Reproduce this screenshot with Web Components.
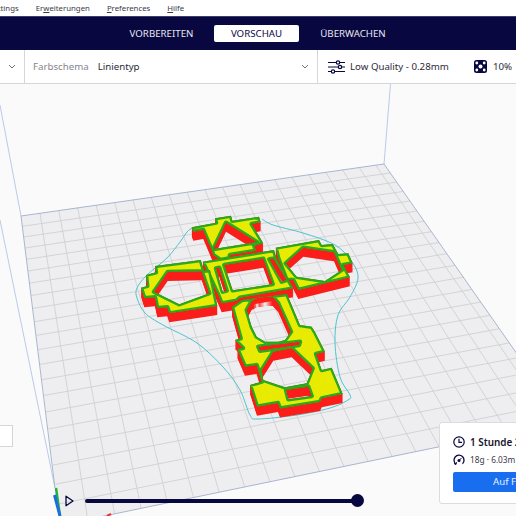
<!DOCTYPE html>
<html>
<head>
<meta charset="utf-8">
<title>Vorschau</title>
<style>
    html, body{ margin:0; height:100%; overflow:hidden; background:#fafafa; }
    body{ display:flex; flex-direction:column; font-family:"Noto Sans", "Open Sans", sans-serif; color:#1b1b2e; }
</style>
</head>
<body>
<app-menubar></app-menubar>
<stage-tabs></stage-tabs>
<view-toolbar></view-toolbar>
<build-view>
    <layer-slider></layer-slider>
    <print-panel></print-panel>
</build-view>

<script>
class AppMenubar extends HTMLElement{
    constructor(){
        super();
        this.attachShadow({mode:'open'}).innerHTML = `
        <style>
        :host{ display:flex; flex:none; height:16px; background:#fff; overflow:hidden; font-size:7.800px; line-height:16px; color:#3a3a48; white-space:nowrap; }
        span{ flex:none; }
        .settings{ margin-left:-11px; margin-right:17px; }
        .ext{ margin-right:17px; }
        .pref{ margin-right:17px; }
        u{ text-underline-offset:1px; }
        </style>
        <span class="settings">Settings</span>
        <span class="ext">Er<u>w</u>eiterungen</span>
        <span class="pref"><u>P</u>references</span>
        <span><u>H</u>ilfe</span>`;
    }
}
customElements.define('app-menubar', AppMenubar);

class StageTabs extends HTMLElement{
    constructor(){
        super();
        this.attachShadow({mode:'open'}).innerHTML = `
        <style>
        :host{ display:grid; flex:none; grid-template-columns:repeat(3,85px); gap:10px; justify-content:center; align-items:center; height:34px; padding-right:3px; background:#08073f; font-size:9.700px; color:#e8e8f2; text-align:center; box-sizing:border-box; border-top:1px solid #3c3c6c; }
        div{ height:17px; line-height:17px; border-radius:2px; }
        .active{ background:#fff; color:#08073f; }
        .last{ padding-left:3px; }
        </style>
        <div>VORBEREITEN</div>
        <div class="active">VORSCHAU</div>
        <div class="last">ÜBERWACHEN</div>`;
    }
}
customElements.define('stage-tabs', StageTabs);

class ViewToolbar extends HTMLElement{
    constructor(){
        super();
        const chevron = `<svg width="8" height="5" viewBox="0 0 8 5"><path d="M1 1l3 3 3-3" fill="none" stroke="#70707c" stroke-width="1"/></svg>`;
        this.attachShadow({mode:'open'}).innerHTML = `
        <style>
        :host{ display:flex; flex:none; height:34px; box-sizing:border-box; background:#fff; border-bottom:1px solid #d6d6d6; font-size:9.700px; color:#2b2b38; white-space:nowrap; overflow:hidden; }
        .cell{ display:flex; align-items:center; flex:none; border-right:1px solid #d6d6d6; box-sizing:border-box; }
        .first{ width:25px; justify-content:flex-end; padding-right:8px; }
        .scheme{ width:293px; padding:0 8px 0 8px; }
        .label{ color:#85858f; margin-right:9px; }
        .value{ flex:1; }
        .profile{ display:flex; align-items:center; flex:none; padding-left:10px; }
        .profile svg{ margin-right:5px; flex:none; }
        .name{ width:124px; }
        </style>
        <div class="cell first">${chevron}</div>
        <div class="cell scheme">
            <span class="label">Farbschema</span>
            <span class="value">Linientyp</span>
            ${chevron}
        </div>
        <div class="profile">
            <svg width="17" height="14" viewBox="0 0 17 14">
                <g fill="none" stroke="#08073f" stroke-width="1.200">
                    <path d="M0 2.500h8M12 2.500h5M0 7h10M14 7h3M0 11.500h3M7 11.500h10"/>
                    <circle cx="10" cy="2.500" r="1.700"/>
                    <circle cx="12" cy="7" r="1.700"/>
                    <circle cx="5" cy="11.500" r="1.700"/>
                </g>
            </svg>
            <span class="name">Low Quality - 0.28mm</span>
            <svg width="13" height="13" viewBox="0 0 13 13">
                <rect width="13" height="13" rx="2.500" fill="#08073f"/>
                <g fill="#fff">
                    <circle cx="6.500" cy="6.500" r="2"/>
                    <circle cx="2.800" cy="3" r="1.400"/><circle cx="10.200" cy="3" r="1.400"/>
                    <circle cx="2.800" cy="10" r="1.400"/><circle cx="10.200" cy="10" r="1.400"/>
                </g>
            </svg>
            <span style="margin-left:1px">10%</span>
        </div>`;
    }
}
customElements.define('view-toolbar', ViewToolbar);

// printed parts, screen coordinates. first list is the outline, the others are holes
const PARTS = [
    [ // lower arm with oval and octagon
        [[232,307],[242,300],[287,294],[300,325],[311.700,326.700],[315,332],[325,351.700],[316,354],[321.700,370],[331.700,367.700],[342.700,394],[321.700,398.300],[320,402],[280,408.500],[278,403],[257,406.700],[250,385],[261.700,381.700],[256.700,365],[245,366.700],[237.300,349],[243,348],[235,340],[240.700,338.300]],
        [[246.700,310],[251.700,301],[259.300,297],[272.700,297],[278.300,303.300],[291,331.700],[285,340],[278.300,341.700],[265,341.700],[256.700,336.700],[251.700,326.700]],
        [[261.700,370],[273.300,351.700],[291.700,348.300],[312.700,368.300],[306.700,383.300],[285,387.300],[263.300,380]],
        [[286,390],[308.300,386.700],[311.700,396],[288.300,399.300]],
        [[258.300,346.700],[300,341.700],[299,345],[260,350.700]]
    ],
    [ // centre ring
        [[202.700,261.700],[274,250],[276.700,259.300],[293.300,288.300],[240,297.700],[236.700,300.700],[221.700,303.300],[218.300,295]],
        [[224.300,265],[263.300,258.700],[272.700,284],[232.700,290.300]],
        [[216,268.300],[219.300,267.700],[226.700,290.700],[222.700,291.700]],
        [[269.300,259.300],[273.300,258.700],[286.700,280],[281.700,281.700]]
    ],
    [ // top triangle
        [[215,218.300],[231,215.700],[232.300,220.700],[259,216.700],[260.700,222.300],[251.700,224],[263.300,243.300],[254.300,245.700],[256,250.700],[230,255],[229,258.300],[220.700,260],[213.300,255],[211.700,250],[203.300,230],[193.300,231.700],[191.700,227.300],[216,222.700]],
        [[226,222.700],[257,242],[213.500,249]]
    ],
    [ // left octagon
        [[141,287.700],[147.300,286],[146,275],[156,272.300],[155,266],[200.700,260],[204,270.700],[210,270],[217.300,306],[169.300,313.300],[167.300,307.300],[157.300,308.300],[155,297.300],[144.300,298.300]],
        [[154,291.700],[167.700,272],[201.700,271.300],[209.300,293.300],[179.300,304.300]]
    ],
    [ // right octagon
        [[275.700,247.700],[319,240],[321.700,245],[332.700,244],[338.300,254],[348.300,253.300],[352.700,263.300],[343.300,265],[350,277.300],[298.300,290],[293.300,280],[286.700,280],[278.300,258.300]],
        [[285.700,263.300],[303.300,247.700],[334,252.300],[341.700,270],[325,281],[296.700,276.700]]
    ]
];

const SKIRT = [[262,219],[273,225],[303,233],[335,245],[352,262],[358,278],[350,297],[338,315],[335,343],[340,377],[350,395],[348,400],[330,408],[297,415],[258,419],[250,415],[240,390],[223,367],[197,343],[163,325],[145,313],[137,298],[137,288],[147,275],[167,258],[180,242],[187,232],[192,228]];

class BuildView extends HTMLElement{
    constructor(){
        super();
        this.attachShadow({mode:'open'}).innerHTML = `
        <style>
        :host{ display:block; position:relative; flex:1; min-height:0; background:#fafafa; overflow:hidden; }
        svg{ position:absolute; left:0; top:0; }
        .field{ position:absolute; left:-2px; top:341px; width:15px; height:22px; box-sizing:border-box; background:#fff; border:1px solid #d6d6d6; }
        </style>
        <svg width="516" height="432" viewBox="0 84 516 432">${this.scene()}</svg>
        <div class="field"></div>
        <slot></slot>`;
    }

    // maps the unit square on the plate corners
    plateMap(){
        const [x0,y0,x1,y1,x2,y2,x3,y3] = [21,216, 384,164, 564,421, 60.500,525];
        const dx1 = x1-x2, dx2 = x3-x2, sx = x0-x1+x2-x3;
        const dy1 = y1-y2, dy2 = y3-y2, sy = y0-y1+y2-y3;
        const d = dx1*dy2-dx2*dy1;
        const g = (sx*dy2-dx2*sy)/d, h = (dx1*sy-sx*dy1)/d;
        const a = x1-x0+g*x1, b = x3-x0+h*x3, e = y1-y0+g*y1, f = y3-y0+h*y3;
        return (u,v)=>{
            const w = g*u+h*v+1;
            return [(a*u+b*v+x0)/w, (e*u+f*v+y0)/w];
        };
    }

    grid(){
        const map = this.plateMap();
        const cols = 20.500, rows = 21;
        let d = '';
        for(let i=1; i<cols; i++){
            const p = map(i/cols,0), q = map(i/cols,1);
            d += `M${p[0].toFixed(1)} ${p[1].toFixed(1)}L${q[0].toFixed(1)} ${q[1].toFixed(1)}`;
        }
        for(let i=1; i<rows; i++){
            const p = map(0,i/rows), q = map(1,i/rows);
            d += `M${p[0].toFixed(1)} ${p[1].toFixed(1)}L${q[0].toFixed(1)} ${q[1].toFixed(1)}`;
        }
        return `<path d="${d}" fill="none" stroke="#d0d0d3" stroke-width="0.900"/>`;
    }

    partPath(part){
        return part.map(ring => 'M'+ring.map(p => p.join(' ')).join('L')+'Z').join('');
    }

    skirtPath(){
        const pts = SKIRT;
        let d = `M${pts[0].join(' ')}`;
        for(let i=0; i<pts.length-1; i++){
            const p0 = pts[Math.max(i-1,0)], p1 = pts[i], p2 = pts[i+1], p3 = pts[Math.min(i+2,pts.length-1)];
            const c1 = [p1[0]+(p2[0]-p0[0])/6, p1[1]+(p2[1]-p0[1])/6];
            const c2 = [p2[0]-(p3[0]-p1[0])/6, p2[1]-(p3[1]-p1[1])/6];
            d += `C${c1[0].toFixed(1)} ${c1[1].toFixed(1)} ${c2[0].toFixed(1)} ${c2[1].toFixed(1)} ${p2[0]} ${p2[1]}`;
        }
        return d;
    }

    parts(){
        let clips = '', sides = '', tops = '';
        PARTS.forEach((part,i) => {
            const d = this.partPath(part);
            clips += `<clipPath id="part${i}"><path d="${d}" clip-rule="evenodd"/></clipPath>`;
            for(let y=9; y>=1; y--){
                sides += `<path d="${d}" transform="translate(0 ${y})" fill="#fa1e1a" fill-rule="evenodd"/>`;
            }
        });
        // each top: infill, inner wall inside the edge, thin dark line on the edge
        PARTS.forEach((part,i) => {
            const d = this.partPath(part);
            tops += `<g clip-path="url(#part${i})">
                <path d="${d}" fill="url(#hatch)" fill-rule="evenodd"/>
                <path d="${d}" fill="none" stroke="#22b01e" stroke-width="4.400" stroke-linejoin="round"/>
                <path d="${d}" fill="none" stroke="#5c7a16" stroke-width="1" stroke-linejoin="round"/>
            </g>`;
        });
        return `<defs>${clips}</defs>`+sides+tops;
    }

    scene(){
        return `
        <defs>
            <pattern id="hatch" width="2" height="2" patternUnits="userSpaceOnUse" patternTransform="rotate(-50)">
                <rect width="2" height="2" fill="#eeee00"/>
                <rect width="2" height=".5" fill="#d8e008"/>
            </pattern>
        </defs>
        <path d="M0 105L21 216M390.500 84L384 164M0 220L55 488" fill="none" stroke="#b9cbe8" stroke-width="1"/>
        <path d="M21 216L384 164L564 421L60.500 525Z" fill="#eeeef0"/>
        ${this.grid()}
        <path d="M55 488L21 216L384 164L564 421M60.500 525L564 421" fill="none" stroke="#a9b5cf" stroke-width="1"/>
        <path d="M56 488L60 516" stroke="#22b03c" stroke-width="2.500"/>
        <path d="M54.500 495L60 516" stroke="#1a6fe0" stroke-width="3"/>
        <path d="M107 516L111 514" stroke="#e8302c" stroke-width="2"/>
        <path d="${this.skirtPath()}" fill="none" stroke="#4cc4cc" stroke-width="1"/>
        ${this.parts()}`;
    }
}
customElements.define('build-view', BuildView);

class LayerSlider extends HTMLElement{
    constructor(){
        super();
        this.attachShadow({mode:'open'}).innerHTML = `
        <style>
        :host{ position:absolute; left:65px; top:410px; width:299px; height:14px; display:flex; align-items:center; }
        svg{ flex:none; margin-right:11px; }
        .track{ position:relative; flex:1; height:4px; border-radius:2px; background:#08073f; margin-right:7px; }
        .handle{ position:absolute; right:-7px; top:-5px; width:13px; height:13px; border-radius:50%; background:#08073f; }
        </style>
        <svg width="9" height="12" viewBox="0 0 9 12"><path d="M1 1.200v9.600L8 6z" fill="none" stroke="#08073f" stroke-width="1.300" stroke-linejoin="round"/></svg>
        <div class="track"><div class="handle"></div></div>`;
    }
}
customElements.define('layer-slider', LayerSlider);

class PrintPanel extends HTMLElement{
    constructor(){
        super();
        this.attachShadow({mode:'open'}).innerHTML = `
        <style>
        :host{ position:absolute; left:439px; top:338px; width:150px; height:82px; box-sizing:border-box; padding:11px 13px; background:#fff; border:1px solid #dcdcdc; border-radius:3px; display:flex; flex-direction:column; white-space:nowrap; }
        .row{ display:flex; align-items:center; height:18px; }
        .row svg{ flex:none; margin-right:5px; }
        .time{ font-size:9.900px; font-weight:600; color:#14142c; }
        .mat{ font-size:8.300px; color:#3a3a48; margin-top:1px; }
        .btn{ margin-top:4px; height:20px; line-height:20px; padding-left:40px; background:#196ef0; color:#e8f0ff; font-size:9.700px; border-radius:2px; }
        </style>
        <div class="row time">
            <svg width="12" height="12" viewBox="0 0 12 12"><circle cx="6" cy="6" r="5.200" fill="none" stroke="#08073f" stroke-width="1.200"/><path d="M6 2.800V6.300H9" fill="none" stroke="#08073f" stroke-width="1.200"/></svg>
            <span>1 Stunde 27 Minuten</span>
        </div>
        <div class="row mat">
            <svg width="12" height="12" viewBox="0 0 12 12"><path d="M3 10.200A5 5 0 1 1 9.500 9.800" fill="none" stroke="#08073f" stroke-width="1.300"/><path d="M1 9.500L3 10.500 3.500 8.200" fill="none" stroke="#08073f" stroke-width="1"/><circle cx="6" cy="6.500" r="1.500" fill="#08073f"/><path d="M6 6.500L8.500 4" stroke="#08073f" stroke-width="1"/></svg>
            <span>18g · 6.03m</span>
        </div>
        <div class="btn">Auf Festplatte speichern</div>`;
    }
}
customElements.define('print-panel', PrintPanel);
</script>
</body>
</html>
